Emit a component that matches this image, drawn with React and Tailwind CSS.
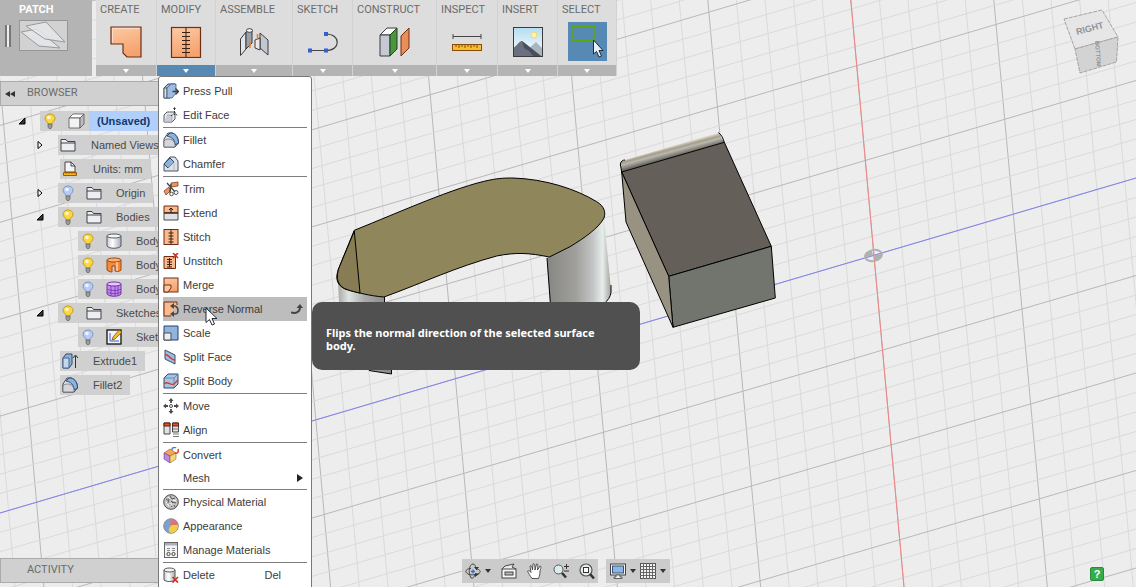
import clsx from 'clsx'

const INK = '#3c3c3c'
const RUST = '#6e2f14'
const PEACH = '#f9b98d'

// ---------- toolbar icons ----------

const TOOL_ICONS = {
  create: (
    <>
      <path d="M1 1H31V31H17L13 27V18H1Z" fill="url(#peach)" stroke={RUST} strokeWidth="1.2" />
      <path d="M2.5 16.5V2.5H29.5" fill="none" stroke="#fddcc4" />
    </>
  ),
  modify: (
    <>
      <rect x="1.5" y="1.5" width="29" height="30" fill="url(#peach)" stroke={RUST} strokeWidth="1.2" />
      <path d="M16 2V31M12 6.5H20M12 10.5H20M12 14.5H20M12 18.5H20M12 22.5H20M12 26.5H20" stroke="#3a2010" fill="none" />
    </>
  ),
  assemble: (
    <>
      <path d="M2.5 13L8 6V23L2.5 29.5Z" fill="#e3e5ea" stroke={INK} />
      <path d="M8 6L14 4V17L8 23Z" fill="#9ba1ac" stroke={INK} />
      <ellipse cx="11.5" cy="4.5" rx="3" ry="1.8" fill="#fff" stroke={INK} />
      <path d="M22 7L30 14V29L22 22Z" fill="#c3c7d2" stroke={INK} />
      <path d="M17 14L22 12V24L17 22Z" fill="#e8eaee" stroke={INK} />
      <path d="M12 16V22M19.5 8V14" stroke="#f07c1e" strokeWidth="1.5" />
    </>
  ),
  sketch: (
    <>
      <path d="M3 24.5H19C34 24.5 34 8 19 8" fill="none" stroke="#444" strokeWidth="1.2" />
      <path d="M1 22.5h4v4h-4zM17 22.5h4v4h-4zM17 6h4v4h-4z" fill="#2f62d0" />
    </>
  ),
  construct: (
    <>
      <path d="M1 9L8 2H18L11 9Z" fill="#fafafa" stroke={INK} />
      <path d="M1 9H11V30H1Z" fill="#c4c9d3" stroke={INK} />
      <path d="M11 9L18 2V23L11 30Z" fill="#4c9440" stroke="#1d4416" />
      <path d="M22 10L30 2V22L22 30Z" fill="#e88e56" stroke={RUST} />
    </>
  ),
  inspect: (
    <>
      <path d="M2 10.5H30M2 8V13M30 8V13" stroke="#444" fill="none" />
      <rect x="1.5" y="18.5" width="29" height="6" fill="#f3bf2f" stroke="#8a4a08" />
      <path d="M5 19v2M8 19v3M11 19v2M14 19v3M17 19v2M20 19v3M23 19v2M26 19v3" stroke="#8a4a08" />
    </>
  ),
  insert: (
    <>
      <rect x="1" y="1.5" width="30" height="29" fill="url(#sky)" />
      <circle cx="22" cy="9" r="3" fill="#fff3b0" stroke="#f6d66c" />
      <path d="M15 24L24 16L31 23V30H17Z" fill="#a8b6c2" />
      <path d="M1 22C5 20 7 15 10 15L29 30H1Z" fill="#6a7080" />
      <path d="M10 15L12 22L17 25L21 30H29Z" fill="#4a4f5c" />
      <rect x="1.5" y="1.5" width="29" height="29" fill="none" stroke={INK} />
    </>
  ),
}

const TOOLS = [
  { id: 'create', label: 'CREATE', width: 'w-[61px]' },
  { id: 'modify', label: 'MODIFY', width: 'w-[59px]' },
  { id: 'assemble', label: 'ASSEMBLE', width: 'w-[77px]' },
  { id: 'sketch', label: 'SKETCH', width: 'w-[60px]' },
  { id: 'construct', label: 'CONSTRUCT', width: 'w-[84px]' },
  { id: 'inspect', label: 'INSPECT', width: 'w-[61px]' },
  { id: 'insert', label: 'INSERT', width: 'w-[60px]' },
  { id: 'select', label: 'SELECT', width: 'w-[59px]' },
]

function Gradients() {
  return (
    <defs>
      <linearGradient id="peach" x1="0" y1="0" x2="0.3" y2="1">
        <stop offset="0" stopColor="#fccaa5" />
        <stop offset="1" stopColor="#f5a36e" />
      </linearGradient>
      <linearGradient id="sky" x1="0" y1="0" x2="0" y2="1">
        <stop offset="0" stopColor="#b4dcf2" />
        <stop offset="0.7" stopColor="#e9f5fa" />
      </linearGradient>
      <linearGradient id="wall" x1="0" y1="0" x2="1" y2="0">
        <stop offset="0" stopColor="#868782" />
        <stop offset="0.45" stopColor="#a09f9c" />
        <stop offset="0.72" stopColor="#c4c6c6" />
        <stop offset="0.87" stopColor="#e6eeeb" />
        <stop offset="1" stopColor="#a5a099" />
      </linearGradient>
      <linearGradient id="wallLeft" x1="0" y1="0" x2="1" y2="0">
        <stop offset="0" stopColor="#aaa8a2" />
        <stop offset="0.2" stopColor="#dfe5e3" />
        <stop offset="0.5" stopColor="#a9aaa9" />
        <stop offset="1" stopColor="#858682" />
      </linearGradient>
      <linearGradient id="round" gradientUnits="userSpaceOnUse" x1="670" y1="146" x2="673" y2="157">
        <stop offset="0" stopColor="#e6e2d6" />
        <stop offset="0.3" stopColor="#a59c89" />
        <stop offset="0.5" stopColor="#b9b9b0" />
        <stop offset="1" stopColor="#67635b" />
      </linearGradient>
      <linearGradient id="body" x1="0" y1="0" x2="1" y2="0">
        <stop offset="0" stopColor="#c9ccd4" />
        <stop offset="0.4" stopColor="#ffffff" />
        <stop offset="1" stopColor="#a9adb8" />
      </linearGradient>
    </defs>
  )
}

function Pointer({ className }) {
  return (
    <svg viewBox="0 0 13 19" className={clsx('h-[19px] w-[13px]', className)}>
      <path d="M1 1V15.5L4.5 12.5L7 18L9.5 17L7 11.5H12Z" fill="#fff" stroke="#222938" />
    </svg>
  )
}

function Tool({ id, label, width, children }) {
  const active = id === 'modify'
  return (
    <div className={clsx('relative h-[76px] shrink-0 border-r border-[#d2d2d2] bg-[#dddddd]', width)}>
      <button className="flex h-full w-full flex-col text-left">
        <span className="h-[18px] pl-1 font-[Roboto,sans-serif] text-[11px] leading-[19px] text-[#6b6b6b]">{label}</span>
        <span className="flex w-full flex-1 items-center justify-center">
          {id === 'select' ? (
            <svg viewBox="0 0 39 39" className="h-[39px] w-[39px] bg-[#5689b3]">
              <rect x="5" y="4.5" width="21" height="14" fill="none" stroke="#5aa80c" strokeWidth="1.5" />
              <path d="M25.5 18V32L28.5 29.5L31 35L33.5 34L31 28.5H35Z" fill="#e9eef8" stroke="#222938" />
            </svg>
          ) : (
            <svg viewBox="0 0 32 32" className="h-8 w-8">{TOOL_ICONS[id]}</svg>
          )}
        </span>
        <span className={clsx('flex h-[11px] w-full items-center justify-center', active ? 'bg-[#5689b3]' : 'bg-[#b4b4b4]')}>
          <svg viewBox="0 0 6 4" className="h-1 w-1.5"><path d="M0 0H6L3 4Z" fill="#fff" /></svg>
        </span>
      </button>
      {children}
    </div>
  )
}

// ---------- modify menu ----------

const FILLET = (
  <>
    <path d="M1 15V7L5 1H9C13 2 15.5 6 15.5 11L12 15Z" fill="#e4e6ea" stroke="#3f4754" />
    <path d="M4 4L7 1H9C13 2 15.5 6 15.5 11L12 13C12 8 9 5 4 4Z" fill="#8db2dc" stroke="#2d4a72" />
    <path d="M1 15V9C4 5 12 7 12 13V15Z" fill="#d4d6dc" stroke="#59606b" strokeWidth="0.7" />
  </>
)

const MENU_ICONS = {
  press: (
    <>
      <path d="M1 5L5 1H12L10 4V12L7 15H1Z" fill="#9dbce0" stroke="#2d4a72" />
      <path d="M1 5H4V15H1Z" fill="#dfe3ea" stroke="#555d69" />
      <path d="M4 5L8 1H13V10L9 15H4Z" fill="#9dbce0" stroke="#2d4a72" strokeWidth="0.7" />
      <path d="M9.5 8.5H15M12.5 5.5L15.5 8.5L12.5 11.5" fill="none" stroke="#3c3c3c" strokeWidth="1.3" />
    </>
  ),
  edit: (
    <>
      <path d="M1 8L4 5H12V12L9 15H1Z" fill="#e9eaee" stroke="#555d69" />
      <path d="M4 8H9V15H1" fill="#c9ccd4" stroke="#8b909a" strokeWidth="0.6" />
      <path d="M11.5 1V8M8 9L11.5 6L15 9" fill="none" stroke="#333" strokeDasharray="2 1" />
      <path d="M10 2L11.5 0L13 2Z" fill="#333" />
    </>
  ),
  fillet: FILLET,
  chamfer: (
    <>
      <path d="M1 8L7 1H12L15 5V15H1Z" fill="#dfe1e6" stroke="#4b5360" />
      <path d="M7 2L11 6L5 12L1 8Z" fill="#8db2dc" stroke="#2d4a72" />
      <path d="M5 12L11 6V15" fill="none" stroke="#9ca1aa" strokeWidth="0.6" />
    </>
  ),
  trim: (
    <>
      <path d="M8 2L15 1V5L8 6ZM1 10L6 6L7 10L3 14Z" fill="#f4935c" stroke={RUST} strokeWidth="0.7" />
      <path d="M4 2L12 11M8 3L7 12" stroke="#444" strokeWidth="1.3" />
      <circle cx="8.5" cy="13" r="1.8" fill="none" stroke="#555" />
      <circle cx="13" cy="11.5" r="2" fill="none" stroke="#555" />
    </>
  ),
  extend: (
    <>
      <path d="M1 1H15V8H1Z" fill={PEACH} stroke={RUST} />
      <path d="M1 8H15V15H1Z" fill="#dfe1e6" stroke="#4c4c4c" />
      <path d="M8 8V3M6 5L8 3L10 5M1 8H15" fill="none" stroke="#2a1508" />
    </>
  ),
  stitch: (
    <>
      <rect x="1" y="0.5" width="14" height="15" fill={PEACH} stroke={RUST} />
      <path d="M8 1V15M5.5 4H10.500M5.5 7H10.500M5.5 10H10.500M5.5 13H10.5" stroke="#3a2010" />
    </>
  ),
  unstitch: (
    <>
      <path d="M1 3.5H12.5V15.5H1Z" fill={PEACH} stroke={RUST} />
      <path d="M6.5 5V14M4 6.5H9M4 9H9M4 11.5H9M4 14H9" stroke="#3a2010" />
      <path d="M10 0L15 5M15 0L10 5" stroke="#d0301c" strokeWidth="1.6" />
    </>
  ),
  merge: (
    <>
      <rect x="1" y="1" width="14" height="14" fill="url(#peach)" stroke={RUST} />
      <path d="M1 8H8V11L5 15H1Z" fill="#fbc8a4" stroke={RUST} />
    </>
  ),
  reverse: (
    <>
      <path d="M14 4V1H1V15H8" fill={PEACH} stroke={RUST} />
      <path d="M10 5H12C16 6 16 13 12 13H10" fill="none" stroke="#474747" strokeWidth="1.5" />
      <path d="M11 2V8L7 5ZM11 10V16L7 13Z" fill="#474747" />
    </>
  ),
  scale: (
    <>
      <path d="M1 1H15V15H1Z" fill="#8fb4de" stroke="#24436c" />
      <path d="M1 8H8V15H1Z" fill="#eceef1" stroke="#4c4c4c" />
    </>
  ),
  splitFace: (
    <>
      <path d="M2 1L12 6V15L2 10Z" fill="#9dbce0" stroke="#3a4f6c" />
      <path d="M2 6C5 4 7 11 12 11" fill="none" stroke="#cf3b24" strokeWidth="1.3" />
    </>
  ),
  splitBody: (
    <>
      <path d="M1 5L5 1H15V11L11 15H1Z" fill="#a8c4e4" stroke="#2d4a72" />
      <path d="M1 5H11V15M11 5L15 1" fill="none" stroke="#56749c" strokeWidth="0.7" />
      <path d="M1 11C4 7 7 13 11 11L15 7" fill="none" stroke="#cf3b24" strokeWidth="1.3" />
    </>
  ),
  move: (
    <>
      <path d="M8 2V5M8 11V14M2 8H5M11 8H14" stroke="#4a4a4a" strokeWidth="1.8" />
      <path d="M5.5 3L8 0L10.5 3ZM5.5 13L8 16L10.5 13ZM3 5.5L0 8L3 10.5ZM13 5.5L16 8L13 10.5Z" fill="#4a4a4a" />
      <circle cx="8" cy="8" r="1.5" fill="#fff" stroke="#4a4a4a" />
    </>
  ),
  align: (
    <>
      <path d="M1 1H7V12H1ZM9.5 1H15.5V10H9.5Z" fill="#e0e2e6" stroke="#444" />
      <path d="M1 1H7V4H1ZM9.5 1H15.5V4H9.5Z" fill="#e8501f" stroke="#5e1d0c" />
      <path d="M10 12H16M10 14.5H16M10 7H16" stroke="#777" />
    </>
  ),
  convert: (
    <>
      <path d="M1 6L7 2L13 6L7 9Z" fill="#f7a35c" stroke="#8d5628" strokeWidth="0.6" />
      <path d="M1 6L7 9V16L1 12Z" fill="#bb8ae8" stroke="#5f3b8a" strokeWidth="0.6" />
      <path d="M7 9L13 6V12L7 16Z" fill="#f4d77a" stroke="#8d6b28" strokeWidth="0.6" />
      <path d="M9 3C9 0 12 0 13 1" fill="none" stroke="#3585e0" strokeWidth="1.5" />
      <path d="M15 2C16 5 14 7 12 6" fill="none" stroke="#e2451c" strokeWidth="1.5" />
    </>
  ),
  physical: (
    <>
      <circle cx="8" cy="8" r="7.3" fill="#c2c2c2" stroke="#4a4a4a" />
      <path d="M3 5L6 7L4 10M7 2L9 5L12 4M9 8L13 9M7 10L9 13M11 11L12 13M6 4V6M8 7L10 9" fill="none" stroke="#555" />
      <path d="M5 3L7 5M10 6L13 7M3 8L6 12M8 9V12" stroke="#fff" />
    </>
  ),
  appearance: (
    <>
      <circle cx="8" cy="8" r="7.3" fill="#7ea0d6" stroke="#8b8b8b" />
      <path d="M8 1C13 1 15 4 15 8L7 7Z" fill="#d9767a" />
      <path d="M15 7C15 12 12 15 8 15C4 13 6 9 9 7Z" fill="#f2cf3e" />
    </>
  ),
  manage: (
    <>
      <rect x="1.5" y="0.5" width="13" height="15" fill="#f4f4f4" stroke="#666" />
      <path d="M2 1H14V3.5H2Z" fill="#a9b1bf" />
      <path d="M4 6.5H7M9 6.5H12M4 8.5H7M9 8.5H12" stroke="#888" />
      <circle cx="5.5" cy="12" r="1.6" fill="none" stroke="#444" />
      <circle cx="10.5" cy="12" r="1.6" fill="none" stroke="#444" />
    </>
  ),
  delete: (
    <>
      <path d="M1 3V13C3 15 10 15 12 13V3Z" fill="url(#body)" stroke="#555" />
      <ellipse cx="6.5" cy="3" rx="5.5" ry="2" fill="#f2f2f2" stroke="#555" />
      <path d="M9.5 10L15 15.5M15 10L9.5 15.5" stroke="#d0301c" strokeWidth="1.7" />
    </>
  ),
}

const MENU_GROUPS = [
  [['press', 'Press Pull'], ['edit', 'Edit Face']],
  [['fillet', 'Fillet'], ['chamfer', 'Chamfer']],
  [
    ['trim', 'Trim'],
    ['extend', 'Extend'],
    ['stitch', 'Stitch'],
    ['unstitch', 'Unstitch'],
    ['merge', 'Merge'],
    ['reverse', 'Reverse Normal'],
    ['scale', 'Scale'],
    ['splitFace', 'Split Face'],
    ['splitBody', 'Split Body'],
  ],
  [['move', 'Move'], ['align', 'Align']],
  [['convert', 'Convert'], ['mesh', 'Mesh']],
  [['physical', 'Physical Material'], ['appearance', 'Appearance'], ['manage', 'Manage Materials']],
  [['delete', 'Delete', 'Del']],
]

function MenuRow({ id, label, shortcut }) {
  const hovered = id === 'reverse'
  return (
    <li className="relative">
      <button
        className={clsx(
          'flex w-full items-center gap-1 text-left text-[11px] leading-4 text-[#3c3c3c]',
          id === 'mesh' ? 'h-[22px]' : 'h-6',
          hovered ? 'bg-[#bdbdbd]' : 'hover:bg-[#bdbdbd]'
        )}
      >
        <svg viewBox="0 0 16 16" className="h-4 w-4 shrink-0">{MENU_ICONS[id]}</svg>
        <span className="flex-1 whitespace-nowrap">{label}</span>
        {shortcut && <span className="pr-[26px]">{shortcut}</span>}
        {id === 'mesh' && (
          <svg viewBox="0 0 6 8" className="mr-1 h-2 w-1.5"><path d="M0 0V8L6 4Z" fill="#222" /></svg>
        )}
        {hovered && (
          <svg viewBox="0 0 12 12" className="mr-1 h-3 w-3">
            <path d="M0 9.5C5 11 9 9 9 4" fill="none" stroke="#444" strokeWidth="2" />
            <path d="M5.5 5L9 1L12 5Z" fill="#444" />
          </svg>
        )}
      </button>
      {hovered && (
        <>
          <Pointer className="pointer-events-none absolute top-2.5 left-[42px]" />
          <div
            role="tooltip"
            className="absolute top-[5px] left-full ml-[5px] w-[328px] rounded-[10px] bg-[#505050] px-3.5 pt-6 pb-[18px] font-['Noto_Sans',sans-serif] text-[11px] leading-[13px] font-bold text-white"
          >
            Flips the normal direction of the selected surface body.
          </div>
        </>
      )}
    </li>
  )
}

function ModifyMenu() {
  return (
    <div className="absolute top-full left-px z-20 w-[154px] rounded-t-[3px] border border-[#777] bg-white px-1 pt-[2px] pb-1">
      {MENU_GROUPS.map((group, i) => (
        <ul key={i} className={clsx(i > 0 && 'border-t border-[#7d7d7d]')}>
          {group.map(([id, label, shortcut]) => (
            <MenuRow key={id} id={id} label={label} shortcut={shortcut} />
          ))}
        </ul>
      ))}
    </div>
  )
}

// ---------- browser tree ----------

function Bulb({ on }) {
  return (
    <svg viewBox="0 0 12 16" className="h-4 w-3 shrink-0">
      <path d="M6 1C3 1 1 3 1 5.5C1 8 4 8.5 4 11H8C8 8.5 11 8 11 5.5C11 3 9 1 6 1Z" fill={on ? '#fbd93c' : '#b5cdf5'} stroke={on ? '#b98a12' : '#6c85b5'} strokeWidth="0.8" />
      <circle cx="5" cy="4.5" r="1.8" fill="#fff" opacity="0.8" />
      <path d="M4 11H8V14L7 15.5H5L4 14Z" fill="#999" stroke="#555" strokeWidth="0.6" />
    </svg>
  )
}

const TREE_ICONS = {
  cube: (
    <>
      <path d="M1 5L5 1H16L12 5Z" fill="#fff" stroke="#555" strokeWidth="0.8" />
      <path d="M1 5H12V15H1Z" fill="#f3f3f5" stroke="#555" strokeWidth="0.8" />
      <path d="M12 5L16 1V11L12 15Z" fill="#b9bcc4" stroke="#555" strokeWidth="0.8" />
    </>
  ),
  folder: (
    <path d="M1 2.5H6L7.5 4.5H15V14H1ZM1 6H15" fill="#eceef1" stroke="#3f434a" strokeWidth="1" />
  ),
  units: (
    <>
      <path d="M3 11V1H9L13 5V11Z" fill="#f4f4f6" stroke="#444" />
      <path d="M9 1V5H13" fill="none" stroke="#444" />
      <path d="M1.5 11.5H14.5V14.5H1.5Z" fill="#f5b91e" stroke="#9a5a08" />
      <path d="M4 12v1M7 12v1M10 12v1M13 12v1" stroke="#9a5a08" />
    </>
  ),
  body: (
    <>
      <path d="M1 3V13C3 16 13 16 15 13V3Z" fill="url(#body)" stroke="#555b66" />
      <ellipse cx="8" cy="3" rx="7" ry="2" fill="#f4f5f7" stroke="#555b66" />
    </>
  ),
  surface: (
    <>
      <path d="M1 3V13C2 14 4 15 6 15V9H9V14C12 15 14 14 15 13V3Z" fill="#f08a3c" stroke="#a4460d" />
      <ellipse cx="8" cy="3" rx="7" ry="2" fill="#f7b27a" stroke="#a4460d" />
      <path d="M11 5V14" stroke="#fbd3b0" strokeWidth="1.5" />
    </>
  ),
  mesh: (
    <>
      <path d="M1 3V13C3 16 13 16 15 13V3Z" fill="#c58af0" stroke="#7134a6" />
      <ellipse cx="8" cy="3" rx="7" ry="2" fill="#e6c8fb" stroke="#7134a6" />
      <path d="M1 8C4 10 12 10 15 8M1 11C4 13 12 13 15 11M5 5V15M9 5V15M12 5V14" fill="none" stroke="#7134a6" strokeWidth="0.8" />
    </>
  ),
  sketch: (
    <>
      <rect x="1" y="1" width="14" height="14" fill="#f4f4f6" stroke="#111" strokeWidth="1.3" />
      <path d="M4 4V12H13" fill="none" stroke="#2f62d0" />
      <path d="M6 11L7 8L13 1L16 3L9 10Z" fill="#f6b92a" stroke="#6e4a0a" strokeWidth="0.7" />
    </>
  ),
  extrude: (
    <>
      <path d="M1 5L4 1H10V11L7 15H1Z" fill="#8db2dc" stroke="#2d4a72" />
      <path d="M1 5H7V15H1Z" fill="#c3d7ee" stroke="#4b6388" />
      <path d="M13.5 15V3M11 5L13.5 2L16 5" fill="none" stroke="#333" />
    </>
  ),
  fillet: FILLET,
}

// pad sets the indent; arrow is the expander state
const TREE = [
  { label: '(Unsaved)', icon: 'cube', bulb: 'on', arrow: 'open', pad: 'pl-[40px]', root: true },
  { label: 'Named Views', icon: 'folder', arrow: 'closed', pad: 'pl-[58px]' },
  { label: 'Units: mm', icon: 'units', pad: 'pl-[60px]' },
  { label: 'Origin', icon: 'folder', bulb: 'off', arrow: 'closed', pad: 'pl-[58px]' },
  { label: 'Bodies', icon: 'folder', bulb: 'on', arrow: 'open', pad: 'pl-[58px]' },
  { label: 'Body1', icon: 'body', bulb: 'on', pad: 'pl-[78px]' },
  { label: 'Body2', icon: 'surface', bulb: 'on', pad: 'pl-[78px]' },
  { label: 'Body3', icon: 'mesh', bulb: 'off', pad: 'pl-[78px]' },
  { label: 'Sketches', icon: 'folder', bulb: 'on', arrow: 'open', pad: 'pl-[58px]' },
  { label: 'Sketch1', icon: 'sketch', bulb: 'off', pad: 'pl-[78px]' },
  { label: 'Extrude1', icon: 'extrude', pad: 'pl-[60px]' },
  { label: 'Fillet2', icon: 'fillet', pad: 'pl-[60px]' },
]

function TreeRow({ item }) {
  const { label, icon, bulb, arrow, pad, root } = item
  return (
    <li className={clsx('relative flex h-6 items-center', pad)}>
      {arrow && (
        <button aria-label={`Toggle ${label}`} className={clsx('absolute', root ? 'left-[18px]' : 'left-[36px]')}>
          <svg viewBox="0 0 8 8" className="h-2 w-2">
            {arrow === 'open' ? (
              <path d="M7 1V7H1Z" fill="#333" stroke="#000" />
            ) : (
              <path d="M2 0.5V7.5L6 4Z" fill="#fff" stroke="#000" />
            )}
          </svg>
        </button>
      )}
      <span className={clsx('flex h-5 items-center bg-[#cfcfcf]/95', bulb ? 'pl-1' : 'pl-[2px]')}>
        {bulb && <Bulb on={bulb === 'on'} />}
        <svg viewBox="0 0 17 16" className={clsx('h-4 w-[17px] shrink-0', bulb && 'ml-3', root && 'mr-1')}>{TREE_ICONS[icon]}</svg>
        <button
          className={clsx(
            'h-5 whitespace-nowrap text-[11px] leading-5',
            root ? 'bg-[#b0d0fb] pr-2 pl-2 font-bold text-[#12386b]' : 'pr-2 text-[#4a4a4a]',
            !root && (bulb ? 'pl-[13px]' : 'pl-3.5')
          )}
        >
          {label}
        </button>
      </span>
    </li>
  )
}

// ---------- canvas ----------

const STEPS = Array.from({ length: 50 }, (_, i) => i - 31)

function Canvas() {
  return (
    <svg viewBox="0 0 1136 587" preserveAspectRatio="xMinYMin slice" className="absolute inset-0 h-full w-full">
      <Gradients />
      {/* ground grid, every fifth line is heavier */}
      {STEPS.map((k) => (
        <line key={`v${k}`} x1={850.8 + 28.6 * k} y1="0" x2={904 + 28.67 * k} y2="587" stroke={k % 5 === 0 ? '#b8b8b8' : '#dadada'} />
      ))}
      {STEPS.map((k) => (
        <line key={`h${k}`} x1="0" y1={513 + 19.38 * (k + 5)} x2="1136" y2={178 + 19.5 * (k + 5)} stroke={k % 5 === 0 ? '#b8b8b8' : '#dadada'} />
      ))}
      <line x1="0" y1="513" x2="1136" y2="178" stroke="#8484f2" />
      <line x1="850.8" y1="0" x2="904" y2="587" stroke="#f28484" />

      {/* origin marker */}
      <g transform="rotate(-12 873.5 255.5)" fill="none" stroke="#b0b0b0" strokeWidth="2">
        <ellipse cx="873.5" cy="255.5" rx="8.5" ry="5.5" />
        <path d="M874 255.5H882C881 259 877 261 874 261ZM873 255.500H865C866 252 870 250 873 250Z" fill="#b0b0b0" stroke="none" />
      </g>

      {/* curved surface */}
      <g strokeLinejoin="round">
        <path d="M338 282L341 340C348 360 358 368 369 370.5L391.5 374L384 297L360 293Z" fill="url(#wallLeft)" />
        <path d="M369 370.5L391.5 374V369M384.5 297V303" fill="none" stroke="#000" />
        <path d="M547 258L570 246.5L593 232L604 218L611 290C611.5 296 608 300 602 306L550.5 310Z" fill="url(#wall)" />
        <path d="M547 258L550.5 305M611 285V292C610.5 297 608 300 603 305" fill="none" stroke="#000" />
        <path
          d="M354.3 230.3C400 212 455 187 490 180C500 178 506 178 513 178C545 179 576 189 596.7 201.7C604 206 606 212 604 218C598 229 584 238 570 246.7L549.3 257C530 253 516 252 496.7 256C456 267 425 282 384 297C370 296 355 292 345 289C335 284 336 276 338.5 269Z"
          fill="#90865b"
          stroke="#000"
        />
        <path d="M354.3 231L360 293C350 291 345 289 342 287C336 282 337 275 338.5 269Z" fill="#877c53" stroke="#000" />
      </g>

      {/* solid block */}
      <g stroke="#000" strokeLinejoin="round">
        <path d="M621.7 172L620.3 164C621 161 623 160 625 160L718.3 132.7L724.3 142.3Z" fill="url(#round)" stroke="none" />
        <path d="M621.7 172L620.3 164C621 161 623 160 625 160M718.3 132.7C721 134 723 138 724.3 142.3" fill="none" />
        <path d="M621.7 172L724.3 142.3L771.3 246.3L668.7 276.3Z" fill="#645f58" />
        <path d="M668.7 276.3L771.3 246.3L775.3 298L673 327.3Z" fill="#72746e" />
        <path d="M621.7 172L668.7 276.3L673 327.3L626 222Z" fill="#989283" />
      </g>
    </svg>
  )
}

function ViewCube() {
  return (
    <svg viewBox="0 0 58 68" className="relative mt-2 mr-4 ml-auto h-[68px] w-[58px] shrink-0">
      <g stroke="#a3a3a3" strokeDasharray="4 1">
        <path d="M2 11L40 2L56 29L13 41Z" fill="#e6e6e6" />
        <path d="M13 41L56 29L54.5 54L18 65Z" fill="#d3d3d3" />
      </g>
      <text x="15" y="27" transform="rotate(-15 15 27)" fill="#90949a" fontSize="9" fontWeight="bold">RIGHT</text>
      <text x="33" y="33" transform="rotate(86 33 33)" fill="#90949a" fontSize="6" fontWeight="bold">BOTTOM</text>
    </svg>
  )
}

// ---------- navigation bar ----------

const NAV_ICONS = {
  Orbit: (
    <>
      <path d="M6 5.5C1 5.5 -1 9 3 11C6 12.500 13 12 15 9.5C16 7.500 13 6 11 6" fill="none" stroke="#444" />
      <path d="M6 15C3 10 4 1 8 1C10 1 10.5 3 10.500 5M10 11C9 15 8 15.500 6 15" fill="none" stroke="#444" />
      <path d="M9 4H14L11.5 7ZM10 10L14 11L10 14Z" fill="#333" />
      <path d="M6 8.5H10M8 6.5V10.5" stroke="#2671d9" strokeWidth="1.3" />
    </>
  ),
  'Look At': (
    <>
      <path d="M1 6L4 3L13 1L11 4L15 6" fill="#eee" stroke="#444" />
      <rect x="1" y="6" width="14" height="9" fill="#f6f6f6" stroke="#444" />
      <rect x="4" y="9" width="8" height="3" fill="#bbb" stroke="#444" />
    </>
  ),
  Pan: (
    <path d="M5 15.5C3 13 1.5 10 0.5 8C1.5 7 3 8 4 9.5L3 3C4 2 5 3 5.5 7L6 1C7 0 8 1 8 7L9.5 1C11 0.5 11 2 10.5 7L13 3C14 3 14.5 4 13 8C13 11 12.5 13 11.5 15.5Z" fill="#fff" stroke="#444" strokeWidth="0.9" />
  ),
  Zoom: (
    <>
      <circle cx="5.5" cy="6.5" r="4.5" fill="#dcebf0" stroke="#555" />
      <path d="M9 10L13 14.5" stroke="#333" strokeWidth="2.5" />
      <path d="M11 3.5H16M13.5 1V6M11 8H16" stroke="#333" />
    </>
  ),
  Fit: (
    <>
      <circle cx="7" cy="7" r="6" fill="#e5ebed" stroke="#555" strokeWidth="1.2" />
      <path d="M11 11L15 15.5" stroke="#333" strokeWidth="2.5" />
      <rect x="4.5" y="4.5" width="5" height="5" fill="#fff" stroke="#333" />
    </>
  ),
  Display: (
    <>
      <rect x="0.5" y="1" width="15" height="11" fill="#f4f4f4" stroke="#444" />
      <rect x="2.5" y="3" width="11" height="7" fill="#8fb6e0" stroke="#35527c" />
      <path d="M6 12H10V14H12V15.5H4V14H6Z" fill="#eee" stroke="#444" strokeWidth="0.8" />
    </>
  ),
  Grid: (
    <>
      <rect x="0.5" y="0.5" width="15" height="15" fill="#f2f2f2" stroke="#555" />
      <path d="M3.5 0V16M6.5 0V16M9.5 0V16M12.5 0V16M0 3.5H16M0 6.5H16M0 9.5H16M0 12.5H16" stroke="#666" />
    </>
  ),
}

function NavButton({ name, menu }) {
  return (
    <button aria-label={name} className="flex items-center gap-1">
      <svg viewBox="0 0 16 16" className="h-4 w-4">{NAV_ICONS[name]}</svg>
      {menu && <svg viewBox="0 0 6 4" className="h-1 w-1.5"><path d="M0 0H6L3 4Z" fill="#333" /></svg>}
    </button>
  )
}

export default function App() {
  return (
    <div className="relative flex h-screen flex-col overflow-hidden bg-[#ededed] font-['Liberation_Sans',Arial,sans-serif]">
      <Canvas />

      <header className="relative z-10 flex h-[76px] items-start">
        <button className="mr-1 flex h-[76px] w-[92px] shrink-0 flex-col bg-[#b4b4b4] text-left">
          <span className="h-[18px] pl-[19px] font-[Roboto,sans-serif] text-[11px] leading-[19px] font-bold text-white">PATCH</span>
          <span className="flex items-center gap-2 pt-[2px] pl-[5px]">
            <span className="h-[22px] w-1.5 border-x-2 border-[#777] bg-[#eee]" />
            <svg viewBox="0 0 49 31" className="h-[31px] w-[49px]">
              <rect x="0.5" y="0.5" width="48" height="30" fill="#d2d2d2" stroke="#969696" />
              <path d="M2 12L18 9L41 28L20 26Z" fill="#e2e4e7" stroke="#999" />
              <path d="M7 6L27 2L46 22L26 19Z" fill="#e6e8eb" fillOpacity="0.8" stroke="#999" />
            </svg>
          </span>
        </button>
        {TOOLS.map((tool) => (
          <Tool key={tool.id} {...tool}>
            {tool.id === 'modify' && <ModifyMenu />}
          </Tool>
        ))}
        <ViewCube />
      </header>

      <aside className="relative mt-[5px] w-56 flex-1">
        <div className="flex h-[25px] items-center gap-3 border border-[#ababab] bg-[#d0d0d0] pl-1">
          <svg viewBox="0 0 10 6" className="h-1.5 w-2.5"><path d="M5 0V6L0 3ZM10 0V6L5 3Z" fill="#333" /></svg>
          <h2 className="font-[Roboto,sans-serif] text-[11px] text-[#6b6b6b]">BROWSER</h2>
        </div>
        <ul className="pt-[3px]">
          {TREE.map((item) => <TreeRow key={item.label} item={item} />)}
        </ul>
      </aside>

      <footer className="relative grid grid-cols-[1fr_auto_1fr] items-end pb-1">
        <div className="flex h-[25px] w-56 items-center border border-[#ababab] bg-[#d0d0d0] pl-[26px]">
          <h2 className="font-[Roboto,sans-serif] text-[11px] text-[#6b6b6b]">ACTIVITY</h2>
        </div>
        <nav className="flex gap-2 pr-1">
          <div className="flex h-6 items-center gap-[10px] bg-[#cbcbcb] px-[3px]">
            <NavButton name="Orbit" menu />
            <NavButton name="Look At" />
            <NavButton name="Pan" />
            <NavButton name="Zoom" />
            <NavButton name="Fit" />
          </div>
          <div className="flex h-6 items-center gap-1 bg-[#cbcbcb] px-1">
            <NavButton name="Display" menu />
            <NavButton name="Grid" menu />
          </div>
        </nav>
        <button
          aria-label="Help"
          className="mr-8 mb-[2px] h-3.5 w-3.5 justify-self-end rounded-[2px] border border-[#2c8a3c] bg-[#36ac4a] text-[11px] leading-3 font-bold text-white"
        >
          ?
        </button>
      </footer>
    </div>
  )
}
